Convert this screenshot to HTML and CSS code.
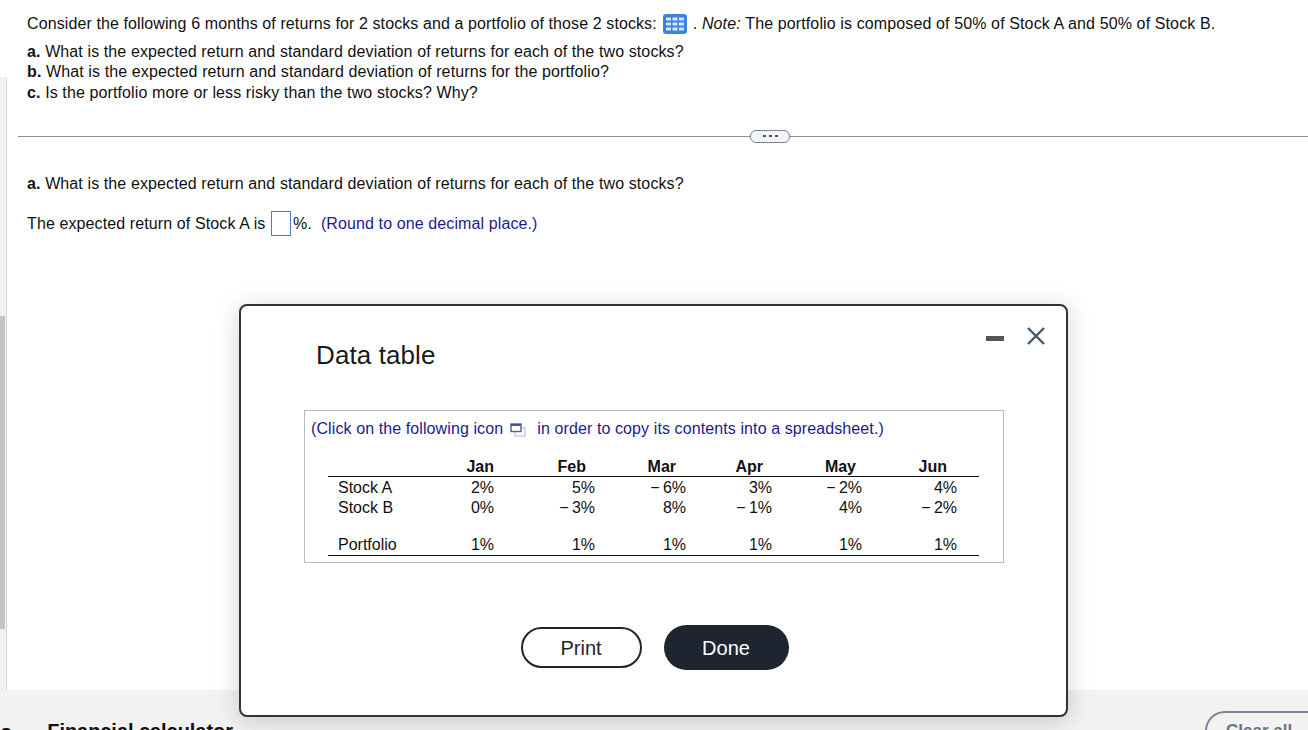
FILE: index.html
```html
<!DOCTYPE html>
<html lang="en-US">
<head>
  <meta charset="UTF-8">
  <meta name="viewport" content="width=device-width, initial-scale=1.0">
  <title>Data table</title>
  <link rel="stylesheet" href="styles.css">
</head>
<body>
  <div class="page">
    <div class="workspace">
      <div class="scrollbar"><div class="scroll-thumb"></div></div>
      <main class="question">
        <p class="intro">Consider the following 6 months of returns for 2 stocks and a portfolio of those 2 stocks:
          <svg class="grid-icon" width="24" height="20" viewBox="0 0 24 20">
            <rect width="24" height="20" rx="3" fill="#3b82e0"/>
            <g fill="#d6e6fa">
              <rect x="3" y="3.5" width="5" height="3"/><rect x="9.5" y="3.5" width="5" height="3"/><rect x="16" y="3.5" width="5" height="3"/>
              <rect x="3" y="8.5" width="5" height="3"/><rect x="9.5" y="8.5" width="5" height="3"/><rect x="16" y="8.5" width="5" height="3"/>
              <rect x="3" y="13.5" width="5" height="3"/><rect x="9.5" y="13.5" width="5" height="3"/><rect x="16" y="13.5" width="5" height="3"/>
            </g>
          </svg>
          <span class="note-dot">.</span> <em>Note:</em> <span class="note-text">The portfolio is composed of 50% of Stock A and 50% of Stock B.</span></p>
        <ol class="parts">
          <li><b>a.</b> What is the expected return and standard deviation of returns for each of the two stocks?</li>
          <li><b>b.</b> What is the expected return and standard deviation of returns for the portfolio?</li>
          <li class="part-last"><b>c.</b> Is the portfolio more or less risky than the two stocks? Why?</li>
        </ol>
        <div class="divider">
          <span class="rule rule-left"></span>
          <span class="more-pill"><i></i><i></i><i></i></span>
          <span class="rule"></span>
        </div>
        <p class="sub-question"><b>a.</b> What is the expected return and standard deviation of returns for each of the two stocks?</p>
        <p class="answer-line">The expected return of Stock A is <span class="answer-box"></span><span class="percent">%.</span><span class="hint">(Round to one decimal place.)</span></p>
      </main>
    </div>
    <footer class="toolbar">
      <span class="cut-o">o</span>
      <span class="calc-label">Financial calculator</span>
      <span class="clear-btn">Clear all</span>
    </footer>
  </div>

  <section class="dialog">
    <div class="dialog-head">
      <h2>Data table</h2>
      <div class="dialog-controls">
        <span class="minimize"></span>
        <svg class="close" width="20" height="20" viewBox="0 0 20 20"><path d="M2 2 L18 18 M18 2 L2 18" stroke="#44546a" stroke-width="2.4" fill="none"/></svg>
      </div>
    </div>
    <div class="data-box">
      <p class="copy-note">(Click on the following icon
        <svg class="copy-icon" width="16" height="14" viewBox="0 0 16 14">
          <rect x="5" y="5" width="10" height="8" fill="#fff" stroke="#c3c7e4" stroke-width="1.4"/>
          <rect x="1" y="1" width="10" height="7.5" fill="#fff" stroke="#5a5f96" stroke-width="1.4"/>
          <rect x="1" y="1" width="10" height="2" fill="#4b5090"/>
        </svg>
        in order to copy its contents into a spreadsheet.)</p>
      <table class="returns">
        <colgroup>
          <col class="col-name"><col class="col-jan"><col class="col-feb"><col class="col-mar"><col class="col-apr"><col class="col-may"><col class="col-jun">
        </colgroup>
        <thead>
          <tr><th></th><th class="m-jan">Jan</th><th>Feb</th><th class="m-wide">Mar</th><th>Apr</th><th class="m-may">May</th><th class="m-wide">Jun</th></tr>
        </thead>
        <tbody>
          <tr><td>Stock A</td><td>2%</td><td>5%</td><td>&minus;&thinsp;6%</td><td>3%</td><td>&minus;&thinsp;2%</td><td>4%</td></tr>
          <tr><td>Stock B</td><td>0%</td><td>&minus;&thinsp;3%</td><td>8%</td><td>&minus;&thinsp;1%</td><td>4%</td><td>&minus;&thinsp;2%</td></tr>
          <tr class="total"><td>Portfolio</td><td>1%</td><td>1%</td><td>1%</td><td>1%</td><td>1%</td><td>1%</td></tr>
        </tbody>
      </table>
    </div>
    <div class="dialog-actions">
      <button class="btn btn-print">Print</button>
      <button class="btn btn-done">Done</button>
    </div>
  </section>
</body>
</html>
```

FILE: styles.css
```css
html, body {
  margin: 0;
  padding: 0;
  height: 730px;
  overflow: hidden;
}
body {
  font-family: "Liberation Sans", Arial, sans-serif;
  font-size: 16px;
  color: #111;
  background-color: #fff;
}
p {
  margin: 0;
}
.page {
  display: flex;
  flex-direction: column;
  height: 730px;
}
.workspace {
  display: flex;
  height: 690px;
  flex: none;
}
.scrollbar {
  width: 6px;
  margin-top: 77px;
  background-color: #f0f0f0;
  border-right: 1px solid #d3d8e4;
  flex: none;
}
.scroll-thumb {
  width: 5px;
  height: 313px;
  margin-top: 239px;
  background-color: #c4c4c4;
}
.question {
  flex: 1;
  padding-top: 14px;
  min-width: 0;
  letter-spacing: 0.11px;
}
.intro {
  margin-left: 20px;
  height: 20px;
  line-height: 18px;
  letter-spacing: 0.1px;
  white-space: nowrap;
}
.grid-icon {
  vertical-align: -5px;
  margin-left: 2px;
}
.note-dot {
  margin-left: 1px;
}
.note-text {
  letter-spacing: 0.12px;
}
.parts {
  list-style: none;
  margin: 9px 0 0 20px;
  padding: 0;
}
.parts li {
  height: 20px;
  line-height: 18px;
}
.parts .part-last {
  height: 21px;
  padding-top: 1px;
  box-sizing: border-box;
}
.divider {
  display: flex;
  align-items: center;
  margin: 25px 0 0 11px;
  height: 14px;
}
.rule {
  flex: 1;
  height: 1px;
  background-color: #8a90a0;
}
.rule-left {
  flex: none;
  width: 732px;
}
.more-pill {
  display: flex;
  align-items: center;
  justify-content: center;
  gap: 3px;
  width: 38px;
  height: 11px;
  border: 1px solid #7d8494;
  border-radius: 6px;
  background-color: #f3f4f7;
  flex: none;
}
.more-pill i {
  width: 3px;
  height: 2px;
  background-color: #4a5264;
}
.sub-question {
  margin: 32px 0 0 20px;
  line-height: 18px;
}
.answer-line {
  display: flex;
  align-items: center;
  margin: 18px 0 0 20px;
  height: 25px;
  white-space: pre;
}
.answer-box {
  width: 18px;
  height: 23px;
  margin-left: 1px;
  border: 1px solid #3f7fd0;
  flex: none;
}
.percent {
  margin-left: 2px;
}
.hint, .copy-note {
  color: #1b1b8f;
}
.hint {
  margin-left: 9px;
}
.toolbar {
  display: flex;
  align-items: flex-start;
  flex: 1;
  background-color: #f2f2f2;
}
.cut-o {
  margin-top: 31px;
  font-weight: bold;
  font-size: 20px;
}
.calc-label {
  margin: 30px 0 0 35px;
  font-weight: bold;
  font-size: 20px;
  letter-spacing: -0.05px;
  color: #111;
}
.clear-btn {
  margin: 21px 0 0 auto;
  width: 103px;
  height: 40px;
  padding: 8px 0 0 19px;
  box-sizing: border-box;
  border: 2px solid #7d8494;
  border-radius: 20px 0 0 20px;
  border-right: none;
  font-weight: bold;
  font-size: 17px;
  color: #6b7280;
  white-space: nowrap;
  overflow: hidden;
}
.dialog {
  position: absolute;
  left: 239px;
  top: 304px;
  width: 829px;
  height: 413px;
  box-sizing: border-box;
  padding: 0 63px 0 64px;
  background-color: #fff;
  border: 2px solid #333;
  border-radius: 8px;
  box-shadow: 0 4px 24px rgba(0, 0, 0, 0.18);
}
.dialog-head {
  display: flex;
  justify-content: space-between;
  height: 104px;
}
.dialog-head h2 {
  margin: 33px 0 0 11px;
  font-weight: normal;
  font-size: 26px;
  line-height: 32px;
  letter-spacing: 0.1px;
  color: #1a1a1a;
}
.dialog-controls {
  display: flex;
  align-items: flex-start;
  gap: 22px;
  margin-right: -43px;
}
.minimize {
  width: 18px;
  height: 5px;
  margin-top: 30px;
  background-color: #555;
}
.close {
  margin-top: 20px;
}
.data-box {
  width: 700px;
  height: 153px;
  box-sizing: border-box;
  margin-left: -1px;
  padding: 9px 24px 0 6px;
  border: 1px solid #bbb;
}
.copy-note {
  line-height: 18px;
  letter-spacing: 0.1px;
  white-space: nowrap;
}
.copy-icon {
  vertical-align: -3px;
  margin: 0 7px 0 2px;
}
.returns {
  border-collapse: collapse;
  table-layout: fixed;
  width: 651px;
  margin: 20px 0 0 17px;
  border-bottom: 1px solid #111;
}
.col-name { width: 95px; }
.col-jan { width: 93px; }
.col-feb { width: 101px; }
.col-mar { width: 91px; }
.col-apr { width: 86px; }
.col-may { width: 90px; }
.col-jun { width: 95px; }
.returns th {
  height: 18px;
  padding: 0 31px 0 0;
  line-height: 18px;
  text-align: right;
  font-weight: bold;
  color: #111;
  border-bottom: 1px solid #111;
}
.returns th.m-jan {
  padding-right: 22px;
}
.returns th.m-wide {
  padding-right: 32px;
}
.returns th.m-may {
  padding-right: 28px;
}
.returns td {
  height: 20px;
  padding: 0 22px 0 0;
  line-height: 18px;
  text-align: right;
  vertical-align: bottom;
  white-space: nowrap;
}
.returns td:first-child {
  padding-left: 10px;
  text-align: left;
}
.returns .total td {
  height: 18px;
  padding-top: 19px;
  padding-bottom: 1px;
}
.dialog-actions {
  display: flex;
  align-items: center;
  justify-content: center;
  gap: 22px;
  margin: 62px 0 0 1px;
}
.btn {
  font-family: inherit;
  font-size: 20px;
  border-radius: 23px;
  box-sizing: border-box;
  padding: 2px 0 0;
}
.btn-print {
  width: 121px;
  height: 41px;
  border: 2px solid #1e2430;
  background-color: #fff;
  color: #1e2430;
}
.btn-done {
  width: 125px;
  height: 45px;
  border: none;
  background-color: #1e2430;
  color: #fff;
}
```
